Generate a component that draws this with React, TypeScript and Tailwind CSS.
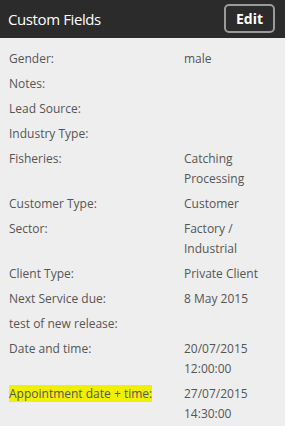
import React from "react";

type Field = { label: string; value?: string[]; highlight?: boolean };

const fields: Field[] = [
  { label: "Gender:", value: ["male"] },
  { label: "Notes:" },
  { label: "Lead Source:" },
  { label: "Industry Type:" },
  { label: "Fisheries:", value: ["Catching", "Processing"] },
  { label: "Customer Type:", value: ["Customer"] },
  { label: "Sector:", value: ["Factory /", "Industrial"] },
  { label: "Client Type:", value: ["Private Client"] },
  { label: "Next Service due:", value: ["8 May 2015"] },
  { label: "test of new release:" },
  { label: "Date and time:", value: ["20/07/2015", "12:00:00"] },
  { label: "Appointment date + time:", value: ["27/07/2015", "14:30:00"], highlight: true },
];

export default function App() {
  return (
    <div className="w-[285px] h-[426px] bg-[#eeeeee] font-['Open_Sans',sans-serif] overflow-hidden">
      <div className="h-[38px] bg-[#2b2b2b] flex items-center justify-between pl-2 pr-[10px]">
        <span className="text-white text-[15px] tracking-[-0.4px]">Custom Fields</span>
        <button
          type="button"
          className="h-[29px] mt-[-1px] px-[10px] border-2 border-[#9a9a9a] rounded-[5px] text-white text-[14px] font-bold leading-none"
        >
          Edit
        </button>
      </div>
      <div className="pt-[11px] px-[9px] flex flex-col gap-[5px] text-[12px] leading-[20px] text-[#555555]">
        {fields.map((f) => (
          <div key={f.label} className="flex">
            <div className="w-[175px] shrink-0">
              {f.highlight ? <span className="bg-[#f0f000]">{f.label}</span> : f.label}
            </div>
            <div className="flex flex-col">
              {f.value?.map((v) => (
                <span key={v}>{v}</span>
              ))}
            </div>
          </div>
        ))}
      </div>
    </div>
  );
}
